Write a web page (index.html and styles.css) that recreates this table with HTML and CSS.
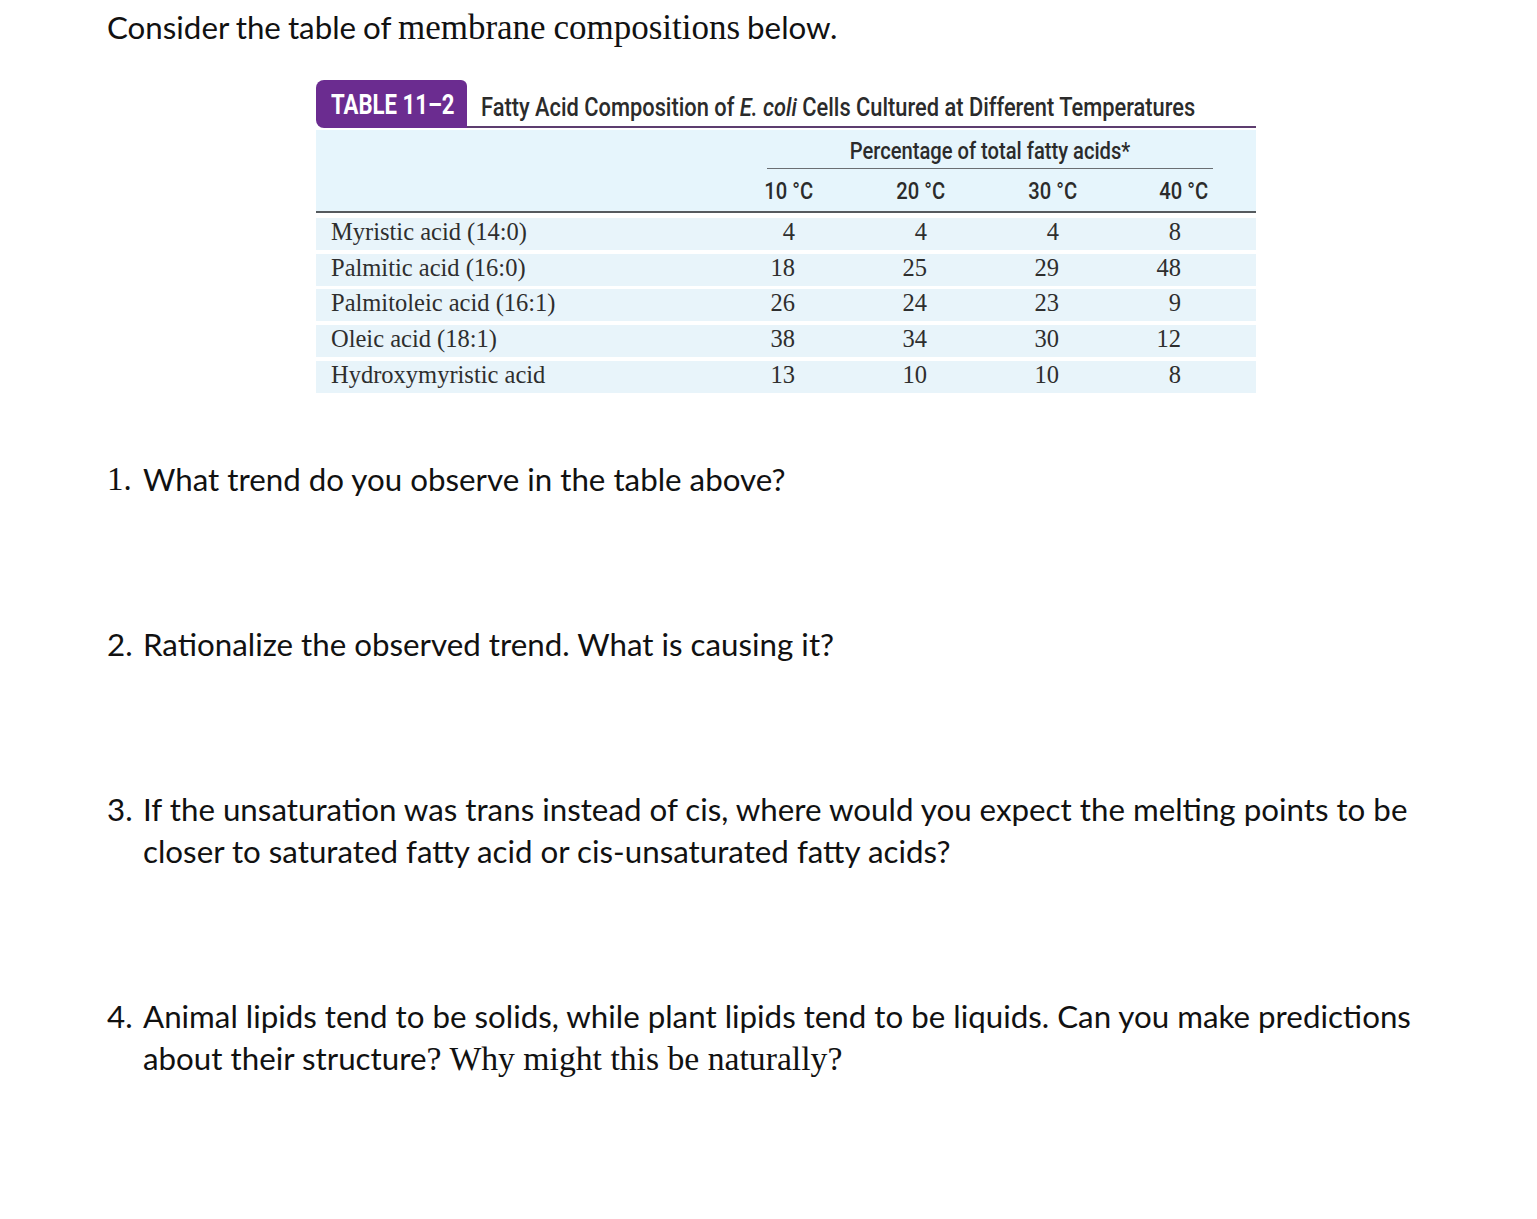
FILE: index.html
```html
<!DOCTYPE html>
<html lang="en">
<head>
<meta charset="utf-8">
<title>Membrane compositions</title>
<link rel="stylesheet" href="styles.css">
</head>
<body>
<div class="page">
  <p class="intro">Consider the table of <span class="serif">membrane compositions</span> below.</p>

  <div class="fig">
    <div class="caption">
      <div class="tab"><span class="cond">TABLE 11–2</span></div>
      <div class="title"><span class="cond">Fatty Acid Composition of <i>E. coli</i> Cells Cultured at Different Temperatures</span></div>
    </div>
    <div class="head">
      <div class="pct"><span class="cond">Percentage of total fatty acids*</span></div>
      <div class="temps">
        <div class="sp"></div>
        <div class="th"><span class="cond">10 °C</span></div>
        <div class="th"><span class="cond">20 °C</span></div>
        <div class="th"><span class="cond">30 °C</span></div>
        <div class="th last"><span class="cond">40 °C</span></div>
        <div class="sp2"></div>
      </div>
    </div>
    <div class="body">
      <div class="row"><div class="lab">Myristic acid (14:0)</div><div class="num">4</div><div class="num">4</div><div class="num">4</div><div class="num last">8</div><div class="sp2"></div></div>
      <div class="row"><div class="lab">Palmitic acid (16:0)</div><div class="num">18</div><div class="num">25</div><div class="num">29</div><div class="num last">48</div><div class="sp2"></div></div>
      <div class="row"><div class="lab">Palmitoleic acid (16:1)</div><div class="num">26</div><div class="num">24</div><div class="num">23</div><div class="num last">9</div><div class="sp2"></div></div>
      <div class="row"><div class="lab">Oleic acid (18:1)</div><div class="num">38</div><div class="num">34</div><div class="num">30</div><div class="num last">12</div><div class="sp2"></div></div>
      <div class="row"><div class="lab">Hydroxymyristic acid</div><div class="num">13</div><div class="num">10</div><div class="num">10</div><div class="num last">8</div><div class="sp2"></div></div>
    </div>
  </div>

  <div class="q">
    <span class="n serif">1.</span>
    <span class="qt">What trend do you observe in the table above?</span>
  </div>
  <div class="q">
    <span class="n">2.</span>
    <span class="qt">Rationalize the observed trend. What is causing it?</span>
  </div>
  <div class="q">
    <span class="n">3.</span>
    <span class="qt">If the unsaturation was trans instead of cis, where would you expect the melting points to be closer to saturated fatty acid or cis-unsaturated fatty acids?</span>
  </div>
  <div class="q">
    <span class="n">4.</span>
    <span class="qt">Animal lipids tend to be solids, while plant lipids tend to be liquids. Can you make predictions about their structure<span class="serif-q">?</span> <span class="serif-q">Why might this be naturally?</span></span>
  </div>
</div>
</body>
</html>
```

FILE: styles.css
```css
html, body {
  margin: 0;
  padding: 0;
  background: #ffffff;
}

body {
  font-family: Lato, "Open Sans", sans-serif;
  font-size: 31.3px;
  color: #111111;
}

.page {
  padding: 6px 0 40px 107px;
}

.serif,
.serif-q {
  font-family: "Liberation Serif", "Times New Roman", serif;
  font-size: 35px;
}

.serif-q {
  font-size: 33.7px;
}

.intro {
  margin: 0;
  line-height: 42px;
  word-spacing: -1px;
}

/* condensed display text */
.cond {
  display: inline-block;
  white-space: nowrap;
  font-family: Roboto, "DejaVu Sans", sans-serif;
  font-weight: 500;
  transform: scaleX(0.84);
  transform-origin: left center;
}

/* ---------- table figure ---------- */
.fig {
  margin: 31px 0 0 209px;
  width: 940px;
}

.caption {
  display: flex;
  height: 48px;
}

.tab {
  flex: 0 0 151px;
  min-width: 0;
  background: #6b2c90;
  color: #ffffff;
  border-radius: 8px 6px 0 8px;
  font-size: 27px;
  line-height: 48px;
  padding-left: 15px;
  box-sizing: border-box;
  white-space: nowrap;
}

.tab .cond {
  font-weight: 700;
  transform: scaleX(0.82);
}

.title {
  flex: 1;
  min-width: 0;
  border-bottom: 2px solid #5d3d6f;
  padding-left: 14px;
  font-size: 26px;
  line-height: 52px;
  color: #2b2b2b;
  white-space: nowrap;
}

.head {
  margin-top: 2px;
  background: #e6f5fc;
  border-bottom: 2px solid #555a5e;
  height: 81px;
  color: #2b2b2b;
}

.pct {
  margin: 0 43px 0 451px;
  height: 39px;
  box-sizing: border-box;
  border-bottom: 1.5px solid #6a6e72;
  font-size: 24px;
  line-height: 40px;
  text-align: center;
  white-space: nowrap;
}

.pct .cond {
  transform-origin: center center;
}

.temps,
.row {
  display: grid;
  grid-template-columns: 432px 82px 132px 132px 132px 30px;
}

.th {
  text-align: right;
  padding-right: 17px;
  font-size: 24px;
  line-height: 42px;
  white-space: nowrap;
}

.th .cond {
  transform-origin: right center;
}

.th.last {
  padding-right: 18px;
}

.body {
  padding-top: 1px;
}

.row {
  margin-top: 3.75px;
  height: 32px;
  background: #e8f4fa;
  font-family: "Liberation Serif", "Times New Roman", serif;
  font-size: 24.5px;
  line-height: 28px;
  color: #2e2e2e;
}

.lab {
  padding-left: 15px;
}

.num {
  text-align: right;
  padding-right: 35px;
}

.num.last {
  padding-right: 45px;
}

/* ---------- questions ---------- */
.q {
  display: flex;
  line-height: 42px;
  max-width: 1315px;
}

.fig + .q {
  margin-top: 65px;
}

.q + .q {
  margin-top: 123px;
}

.n {
  flex: 0 0 36px;
}

.n.serif {
  font-size: 33px;
}

.qt {
  flex: 1;
}
```
